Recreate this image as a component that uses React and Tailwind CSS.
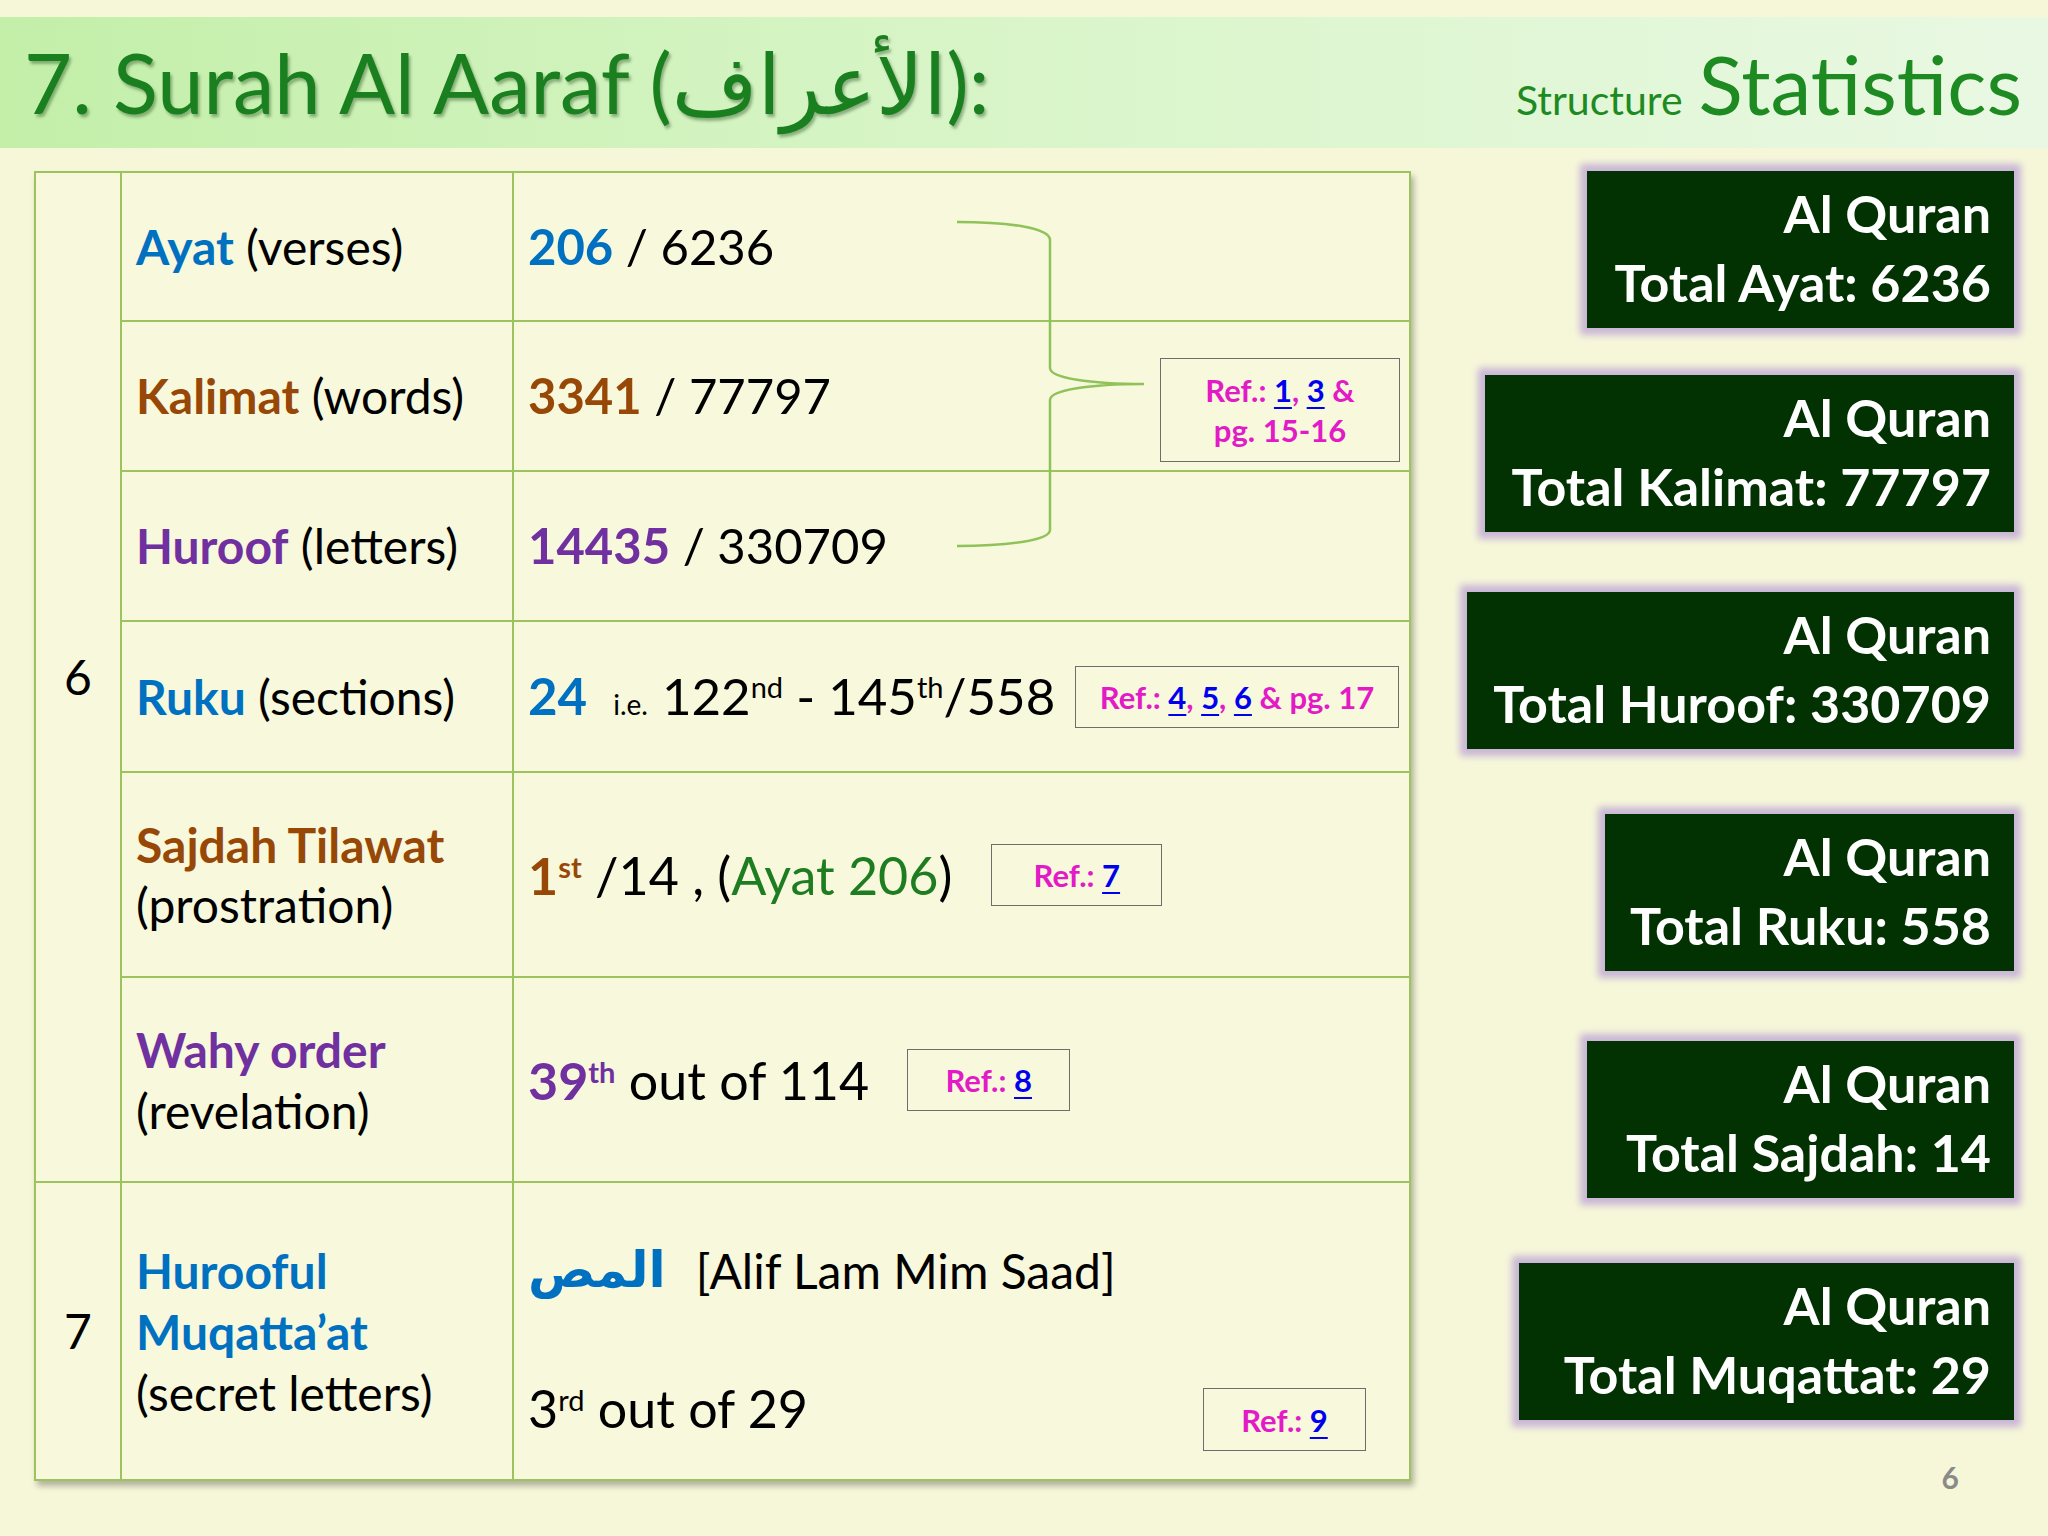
import React from "react";

const blue = "text-[#0070c0]";
const brown = "text-[#984806]";
const purple = "text-[#7030a0]";

const Num = ({ children }) => (
  <span className="text-[#0000ee] underline decoration-2 underline-offset-[5px]">{children}</span>
);

const Ref = ({ className = "", children }) => (
  <div
    className={`flex shrink-0 items-center justify-center border border-[#6d6d6d] bg-[#f7f8dc] text-center text-[31px] font-bold leading-[40px] text-[#e21bc6] ${className}`}
  >
    <div>{children}</div>
  </div>
);

const Sup = ({ className = "", children }) => (
  <sup className={`top-[-17px] text-[29px] ${className}`}>{children}</sup>
);

const Stat = ({ className, label }) => (
  <div
    className={`h-[157px] bg-[#023202] pr-[23px] pt-[8px] text-right text-[52px] font-bold leading-[69px] text-white shadow-[0_0_7px_7px_#c9b6d6] ${className}`}
  >
    <div>Al Quran</div>
    <div>{label}</div>
  </div>
);

const cell = "flex items-center border-l-2 border-[#9cc35e] pl-[14px]";
const cellT = "flex items-center border-l-2 border-t-2 border-[#9cc35e] pl-[14px]";

export default function App() {
  return (
    <div className="relative flex h-[1536px] w-[2048px] flex-col overflow-hidden bg-[#f6f7d9] font-[Lato,'DejaVu_Sans',sans-serif]">
      {/* title band */}
      <div className="mt-[17px] flex h-[131px] items-center justify-between bg-linear-to-r from-[#c3efa9] via-[#d9f5c9] to-[#e9f8e3] pl-[24px] pr-[26px]">
        <h1 className="text-[83px] leading-none text-[#1a7f1e] [text-shadow:2px_3px_3px_rgba(0,50,0,0.35)]">
          7. Surah Al Aaraf (الأعراف):
        </h1>
        <div className="flex items-baseline gap-[16px] text-[#1e8a22]">
          <span className="text-[41px] leading-none">Structure</span>
          <span className="text-[82px] leading-none">Statistics</span>
        </div>
      </div>

      <div className="mt-[23px] flex">
        {/* table */}
        <div className="ml-[34px] grid h-[1310px] w-[1377px] shrink-0 grid-cols-[84px_392px_897px] grid-rows-[147px_150px_150px_151px_205px_205px_298px] border-2 border-[#9cc35e] bg-[#f7f8dc] text-[48px] text-black shadow-[3px_5px_6px_rgba(0,0,0,0.28)]">
          <div className="row-span-6 flex items-center justify-center">6</div>

          <div className={cell}>
            <span className={`font-bold ${blue}`}>Ayat</span>&nbsp;(verses)
          </div>
          <div className={`${cell} text-[49px]`}>
            <span className={`font-bold ${blue}`}>206</span>&nbsp;/&nbsp;6236
          </div>

          <div className={cellT}>
            <span className={`font-bold ${brown}`}>Kalimat</span>&nbsp;(words)
          </div>
          <div className={`${cellT} justify-between text-[49px]`}>
            <div>
              <span className={`font-bold ${brown}`}>3341</span>&nbsp;/&nbsp;77797
            </div>
            <Ref className="mr-[9px] mt-[28px] h-[104px] w-[240px]">
              <div>
                Ref.: <Num>1</Num>, <Num>3</Num> &amp;
              </div>
              <div>pg. 15-16</div>
            </Ref>
          </div>

          <div className={cellT}>
            <span className={`font-bold ${purple}`}>Huroof</span>&nbsp;(letters)
          </div>
          <div className={`${cellT} text-[49px]`}>
            <span className={`font-bold ${purple}`}>14435</span>&nbsp;/&nbsp;330709
          </div>

          <div className={cellT}>
            <span className={`font-bold ${blue}`}>Ruku</span>&nbsp;(sections)
          </div>
          <div className={`${cellT} text-[51px]`}>
            <div className="whitespace-nowrap">
              <span className={`font-bold ${blue}`}>24</span>
              <span className="ml-[26px] mr-[14px] text-[28px]">i.e.</span>
              122<Sup>nd</Sup> - 145<Sup>th</Sup>/558
            </div>
            <Ref className="ml-auto mr-[10px] h-[62px] w-[324px]">
              Ref.: <Num>4</Num>, <Num>5</Num>, <Num>6</Num> &amp; pg. 17
            </Ref>
          </div>

          <div className={cellT}>
            <div className="leading-[60px]">
              <div className={`font-bold ${brown}`}>Sajdah Tilawat</div>
              <div>(prostration)</div>
            </div>
          </div>
          <div className={`${cellT} text-[52px]`}>
            <div className="whitespace-nowrap">
              <span className={`font-bold ${brown}`}>1</span>
              <Sup className={`font-bold ${brown}`}>st</Sup> /14 , (
              <span className="text-[#1f7d21]">Ayat 206</span>)
            </div>
            <Ref className="ml-[39px] h-[62px] w-[171px]">
              Ref.: <Num>7</Num>
            </Ref>
          </div>

          <div className={cellT}>
            <div className="leading-[61px]">
              <div className={`font-bold ${purple}`}>Wahy order</div>
              <div>(revelation)</div>
            </div>
          </div>
          <div className={`${cellT} text-[52px]`}>
            <div className="whitespace-nowrap">
              <span className={`font-bold ${purple}`}>39</span>
              <Sup className={`font-bold ${purple}`}>th</Sup> out of 114
            </div>
            <Ref className="ml-[38px] h-[62px] w-[163px]">
              Ref.: <Num>8</Num>
            </Ref>
          </div>

          <div className="flex items-center justify-center border-t-2 border-[#9cc35e]">7</div>
          <div className={cellT}>
            <div className="leading-[61px]">
              <div className={`font-bold ${blue}`}>Hurooful</div>
              <div className={`font-bold ${blue}`}>Muqatta’at</div>
              <div>(secret letters)</div>
            </div>
          </div>
          <div className="flex flex-col border-l-2 border-t-2 border-[#9cc35e] pl-[14px] pt-[57px]">
            <div className="flex h-[61px] items-center leading-[61px]">
              <span className={`font-['DejaVu_Sans',sans-serif] text-[50px] font-bold ${blue}`}>المص</span>
              <span className="ml-[30px]">[Alif Lam Mim Saad]</span>
            </div>
            <div className="mt-[77px] flex items-start justify-between">
              <div className="text-[52px] leading-[61px]">
                3<Sup>rd</Sup> out of 29
              </div>
              <Ref className="mr-[43px] mt-[10px] h-[63px] w-[163px]">
                Ref.: <Num>9</Num>
              </Ref>
            </div>
          </div>
        </div>

        {/* statistic boxes */}
        <div className="flex flex-1 flex-col items-end pr-[34px]">
          <Stat className="w-[427px]" label="Total Ayat: 6236" />
          <Stat className="mt-[47px] w-[529px]" label="Total Kalimat: 77797" />
          <Stat className="mt-[60px] w-[547px]" label="Total Huroof: 330709" />
          <Stat className="mt-[65px] w-[409px]" label="Total Ruku: 558" />
          <Stat className="mt-[70px] w-[427px]" label="Total Sajdah: 14" />
          <Stat className="mt-[65px] w-[495px]" label="Total Muqattat: 29" />
          <div className="mr-[55px] mt-[42px] text-[30px] font-bold leading-none text-[#8a8a8a]">6</div>
        </div>
      </div>

      {/* brace joining the first three rows */}
      <svg
        className="absolute left-[950px] top-[215px]"
        width="200"
        height="340"
        viewBox="0 0 200 340"
        fill="none"
      >
        <path
          d="M7,7 C60,7 100,13 100,25 L100,153 C100,163 140,169 194,169 C140,169 100,175 100,185 L100,315 C100,325 60,331 7,331"
          stroke="#8fc35a"
          strokeWidth="2.5"
        />
      </svg>
    </div>
  );
}
